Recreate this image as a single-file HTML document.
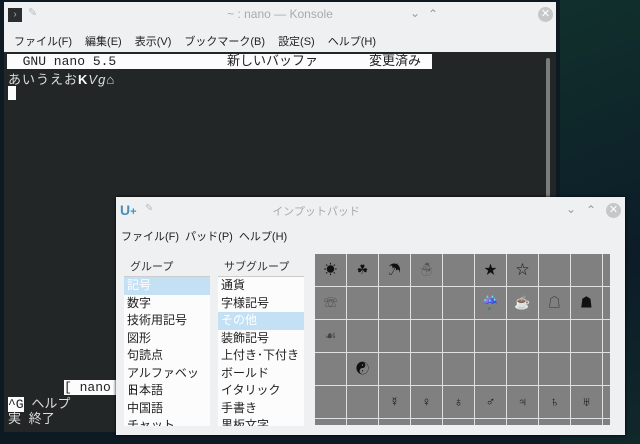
<!DOCTYPE html><html><head><meta charset="utf-8"><style>
body{margin:0;width:640px;height:444px;overflow:hidden;background:#0d1a24;font-family:"Liberation Sans","Noto Sans CJK JP",sans-serif;position:relative}
.abs{position:absolute}
.mono{font-family:"Liberation Mono","Noto Sans CJK JP",monospace}
.cell{position:absolute;width:31px;height:32px;background:#808080;text-align:center;line-height:32px;font-size:13px;color:#111}
.li{height:17.5px;line-height:17.5px;padding-left:3px;font-size:12px;color:#222}
.sel{background:#c4e0f5;color:#fff}
.x{position:absolute;width:15px;height:15px;border-radius:50%;background:#c5c7c9;color:#fff;font-size:11px;line-height:15px;text-align:center}
.mb span{margin-right:13px}
</style></head><body>
<div class="abs" style="left:560px;top:0;width:80px;height:444px;background:linear-gradient(160deg,#11302c,#0c1c28 60%,#10282a)"></div>
<!-- Konsole -->
<div class="abs" style="left:4px;top:2px;width:552px;height:430px;background:#232627"></div>
<div class="abs" style="left:4px;top:2px;width:552px;height:50px;background:#eff0f1"></div>
<div class="abs" style="left:8px;top:8px;width:14px;height:14px;background:#2b2e30;color:#aaa;font-size:10px;line-height:14px;text-align:center">›</div>
<div class="abs" style="left:28px;top:6px;color:#bbb;font-size:11px">✎</div>
<div class="abs" style="left:0;top:7px;width:560px;text-align:center;color:#a8aaac;font-size:12px">~ : nano — Konsole</div>
<div class="abs" style="left:410px;top:6px;color:#999;font-size:12px">⌄</div>
<div class="abs" style="left:428px;top:7px;color:#999;font-size:12px">⌃</div>
<div class="x" style="left:538px;top:7px">✕</div>
<div class="abs mb" style="left:14px;top:33px;font-size:11px;color:#222;white-space:nowrap"><span>ファイル(F)</span><span>編集(E)</span><span>表示(V)</span><span>ブックマーク(B)</span><span>設定(S)</span><span>ヘルプ(H)</span></div>
<div class="abs mono" style="left:7px;top:54px;width:425px;height:15px;background:#fcfcfc;color:#222;font-size:13px;line-height:15px;white-space:pre">  GNU nano 5.5<span style="position:absolute;left:220px">新しいバッファ</span><span style="position:absolute;left:362px">変更済み</span></div>
<div class="abs" style="left:8px;top:69px;color:#ddd;font-size:13px;letter-spacing:1px">あいうえお<b style="color:#fff">K</b><i>Vg</i>⌂</div>
<div class="abs" style="left:8px;top:86px;width:8px;height:14px;background:#fcfcfc"></div>
<div class="abs" style="left:546px;top:58px;width:4px;height:150px;background:#7a7c7e;border-radius:2px"></div>
<div class="abs mono" style="left:64px;top:380px;width:56px;height:15px;background:#fcfcfc;color:#222;font-size:13px;line-height:15px;white-space:pre">[ nano</div>
<div class="abs mono" style="left:8px;top:397px;color:#ddd;font-size:13px;line-height:15px;white-space:pre"><span style="background:#fcfcfc;color:#222">^G</span> ヘルプ</div>
<div class="abs mono" style="left:8px;top:412px;color:#ddd;font-size:13px;line-height:15px;white-space:pre">実 終了</div>
<!-- Input pad -->
<div class="abs" style="left:116px;top:197px;width:509px;height:238px;background:#eff0f1;box-shadow:0 0 3px #000"></div>
<div class="abs" style="left:120px;top:202px;color:#4a8fb8;font-weight:bold;font-size:14px">U<span style="font-size:11px">+</span></div>
<div class="abs" style="left:145px;top:203px;color:#bbb;font-size:10px">✎</div>
<div class="abs" style="left:116px;top:203px;width:400px;text-align:center;color:#a8aaac;font-size:11px">インプットパッド</div>
<div class="abs" style="left:566px;top:202px;color:#999;font-size:12px">⌄</div>
<div class="abs" style="left:586px;top:203px;color:#999;font-size:12px">⌃</div>
<div class="x" style="left:606px;top:203px">✕</div>
<div class="abs" style="left:121px;top:228px;font-size:11px;color:#222">ファイル(F)&nbsp;&nbsp;パッド(P)&nbsp;&nbsp;ヘルプ(H)</div>
<div class="abs" style="left:130px;top:258px;font-size:11px;color:#333">グループ</div>
<div class="abs" style="left:224px;top:258px;font-size:11px;color:#333">サブグループ</div>
<div class="abs" style="left:124px;top:276px;width:86px;height:149px;background:#fcfcfc;overflow:hidden;border-top:1px solid #ccc">
<div class="li sel">記号</div><div class="li">数字</div><div class="li">技術用記号</div><div class="li">図形</div><div class="li">句読点</div><div class="li">アルファベット</div><div class="li">日本語</div><div class="li">中国語</div><div class="li">チャット</div></div>
<div class="abs" style="left:218px;top:276px;width:86px;height:149px;background:#fcfcfc;overflow:hidden;border-top:1px solid #ccc">
<div class="li">通貨</div><div class="li">字様記号</div><div class="li sel">その他</div><div class="li">装飾記号</div><div class="li">上付き･下付き</div><div class="li">ボールド</div><div class="li">イタリック</div><div class="li">手書き</div><div class="li">黒板文字</div></div>
<div class="abs" style="left:315px;top:254px;width:295px;height:171px;background:#e0e0e0;overflow:hidden">
<div style="position:relative">
<div class="cell" style="left:0;top:0">☀</div><div class="cell" style="left:32px;top:0">☘</div><div class="cell" style="left:64px;top:0">☂</div><div class="cell" style="left:96px;top:0;color:#555">☃</div><div class="cell" style="left:128px;top:0"></div><div class="cell" style="left:160px;top:0">★</div><div class="cell" style="left:192px;top:0">☆</div><div class="cell" style="left:224px;top:0"></div><div class="cell" style="left:256px;top:0"></div><div class="cell" style="left:288px;top:0"></div>
<div class="cell" style="left:0;top:33px;color:#444">☏</div><div class="cell" style="left:32px;top:33px"></div><div class="cell" style="left:64px;top:33px"></div><div class="cell" style="left:96px;top:33px"></div><div class="cell" style="left:128px;top:33px"></div><div class="cell" style="left:160px;top:33px;color:#a050d0">☔</div><div class="cell" style="left:192px;top:33px;color:#fff">☕</div><div class="cell" style="left:224px;top:33px;color:#333">☖</div><div class="cell" style="left:256px;top:33px">☗</div><div class="cell" style="left:288px;top:33px"></div>
<div class="cell" style="left:0;top:66px;color:#444">☙</div><div class="cell" style="left:32px;top:66px"></div><div class="cell" style="left:64px;top:66px"></div><div class="cell" style="left:96px;top:66px"></div><div class="cell" style="left:128px;top:66px"></div><div class="cell" style="left:160px;top:66px"></div><div class="cell" style="left:192px;top:66px"></div><div class="cell" style="left:224px;top:66px"></div><div class="cell" style="left:256px;top:66px"></div><div class="cell" style="left:288px;top:66px"></div>
<div class="cell" style="left:0;top:99px"></div><div class="cell" style="left:32px;top:99px">☯</div><div class="cell" style="left:64px;top:99px"></div><div class="cell" style="left:96px;top:99px"></div><div class="cell" style="left:128px;top:99px"></div><div class="cell" style="left:160px;top:99px"></div><div class="cell" style="left:192px;top:99px"></div><div class="cell" style="left:224px;top:99px"></div><div class="cell" style="left:256px;top:99px"></div><div class="cell" style="left:288px;top:99px"></div>
<div class="cell" style="left:0;top:132px"></div><div class="cell" style="left:32px;top:132px"></div><div class="cell" style="left:64px;top:132px">☿</div><div class="cell" style="left:96px;top:132px">♀</div><div class="cell" style="left:128px;top:132px">♁</div><div class="cell" style="left:160px;top:132px">♂</div><div class="cell" style="left:192px;top:132px">♃</div><div class="cell" style="left:224px;top:132px">♄</div><div class="cell" style="left:256px;top:132px">♅</div><div class="cell" style="left:288px;top:132px"></div>
<div class="cell" style="left:0;top:165px"></div><div class="cell" style="left:32px;top:165px"></div><div class="cell" style="left:64px;top:165px"></div><div class="cell" style="left:96px;top:165px"></div><div class="cell" style="left:128px;top:165px"></div><div class="cell" style="left:160px;top:165px"></div><div class="cell" style="left:192px;top:165px"></div><div class="cell" style="left:224px;top:165px"></div><div class="cell" style="left:256px;top:165px"></div><div class="cell" style="left:288px;top:165px"></div>
</div></div>
</body></html>
